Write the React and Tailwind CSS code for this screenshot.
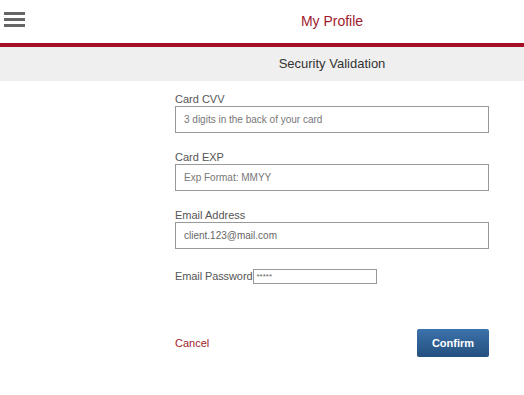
import React from "react";

const Field = ({ label, placeholder, value }) => (
    <div className="mb-[18px]">
        <label className="block text-[11px] leading-[13px] text-[#555]">
            {label}
        </label>
        <input
            type="text"
            readOnly
            placeholder={placeholder}
            value={value}
            className="block w-full h-[27px] border border-[#999] px-[8px] text-[10px] text-[#666] placeholder:text-[#777] bg-white outline-none"
        />
    </div>
);

const App = () => {
    return (
        <div
            className="min-h-[395px] bg-white"
            style={{ fontFamily: '"Liberation Sans", Arial, sans-serif' }}
        >
            {/* Header */}
            <div className="relative flex h-[43px] items-center">
                <button className="absolute left-[4px] top-[12px] flex flex-col gap-[3px]">
                    <span className="block h-[3px] w-[21px] bg-[#666]"></span>
                    <span className="block h-[3px] w-[21px] bg-[#666]"></span>
                    <span className="block h-[3px] w-[21px] bg-[#666]"></span>
                </button>
                <div className="ml-[140px] flex-1 text-center text-[14px] text-[#a01b2c]">
                    My Profile
                </div>
            </div>
            <div className="h-[4px] bg-[#a30f25]"></div>

            {/* Sub title */}
            <div className="flex h-[34px] items-center bg-[#efefef]">
                <div className="ml-[140px] flex-1 text-center text-[13px] text-[#333]">
                    Security Validation
                </div>
            </div>

            {/* Form */}
            <div className="ml-[175px] w-[314px] pt-[12px]">
                <Field label="Card CVV" placeholder="3 digits in the back of your card" />
                <Field label="Card EXP" placeholder="Exp Format: MMYY" />
                <Field label="Email Address" value="client.123@mail.com" />

                <div className="flex h-[15px] items-center mt-[20px]">
                    <span className="text-[11px] text-[#555] tracking-[-0.1px]">Email Password</span>
                    <input
                        type="text"
                        readOnly
                        value="*****"
                        className="ml-[1px] h-[15px] w-[124px] border border-[#999] px-[2px] text-[8px] text-[#666] outline-none"
                    />
                </div>

                <div className="mt-[45px] flex items-center justify-between">
                    <a className="text-[11px] text-[#a01b2c] cursor-pointer">Cancel</a>
                    <button className="h-[28px] w-[72px] rounded-[2px] bg-gradient-to-b from-[#3c72ab] to-[#24507f] text-[11px] font-bold text-white">
                        Confirm
                    </button>
                </div>
            </div>
        </div>
    );
};

export default App;
